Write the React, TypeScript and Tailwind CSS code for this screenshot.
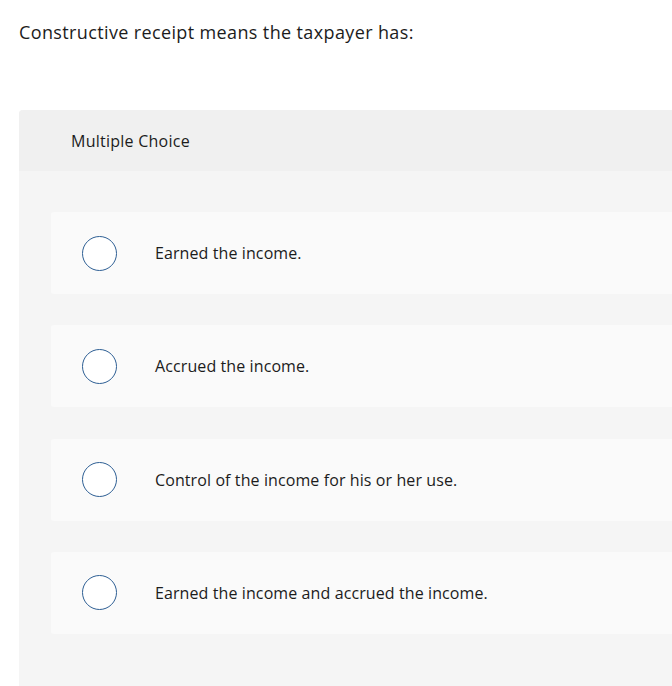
import React from "react";

const options = [
  "Earned the income.",
  "Accrued the income.",
  "Control of the income for his or her use.",
  "Earned the income and accrued the income.",
];

export default function App() {
  return (
    <div
      className="w-[672px] h-[686px] overflow-hidden bg-white text-[#1c1c1c]"
      style={{ fontFamily: "'Open Sans', Lato, sans-serif" }}
    >
      <div className="pl-[19px] pt-[20px] h-[110px]">
        <p className="text-[18px] leading-[24px] tracking-[0.37px]">Constructive receipt means the taxpayer has:</p>
      </div>
      <div className="ml-[19px] w-[700px] rounded-tl-[4px] bg-[#f5f5f5] h-[600px]">
        <div className="h-[61px] bg-[#f0f0f0] rounded-tl-[4px] flex items-center pl-[52px]">
          <span className="text-[16px] tracking-[0.25px]">Multiple Choice</span>
        </div>
        <div className="pl-[32px] pt-[41px] flex flex-col gap-[31.33px]">
          {options.map((o) => (
            <div
              key={o}
              className="h-[82px] bg-[#fafafa] rounded-[3px] flex items-center"
            >
              <div className="ml-[31px] w-[35px] h-[35px] rounded-full border-[1.5px] border-[#2e5f94] bg-white shrink-0" />
              <span className="ml-[38px] text-[16px] tracking-[0.1px]">{o}</span>
            </div>
          ))}
        </div>
      </div>
    </div>
  );
}
